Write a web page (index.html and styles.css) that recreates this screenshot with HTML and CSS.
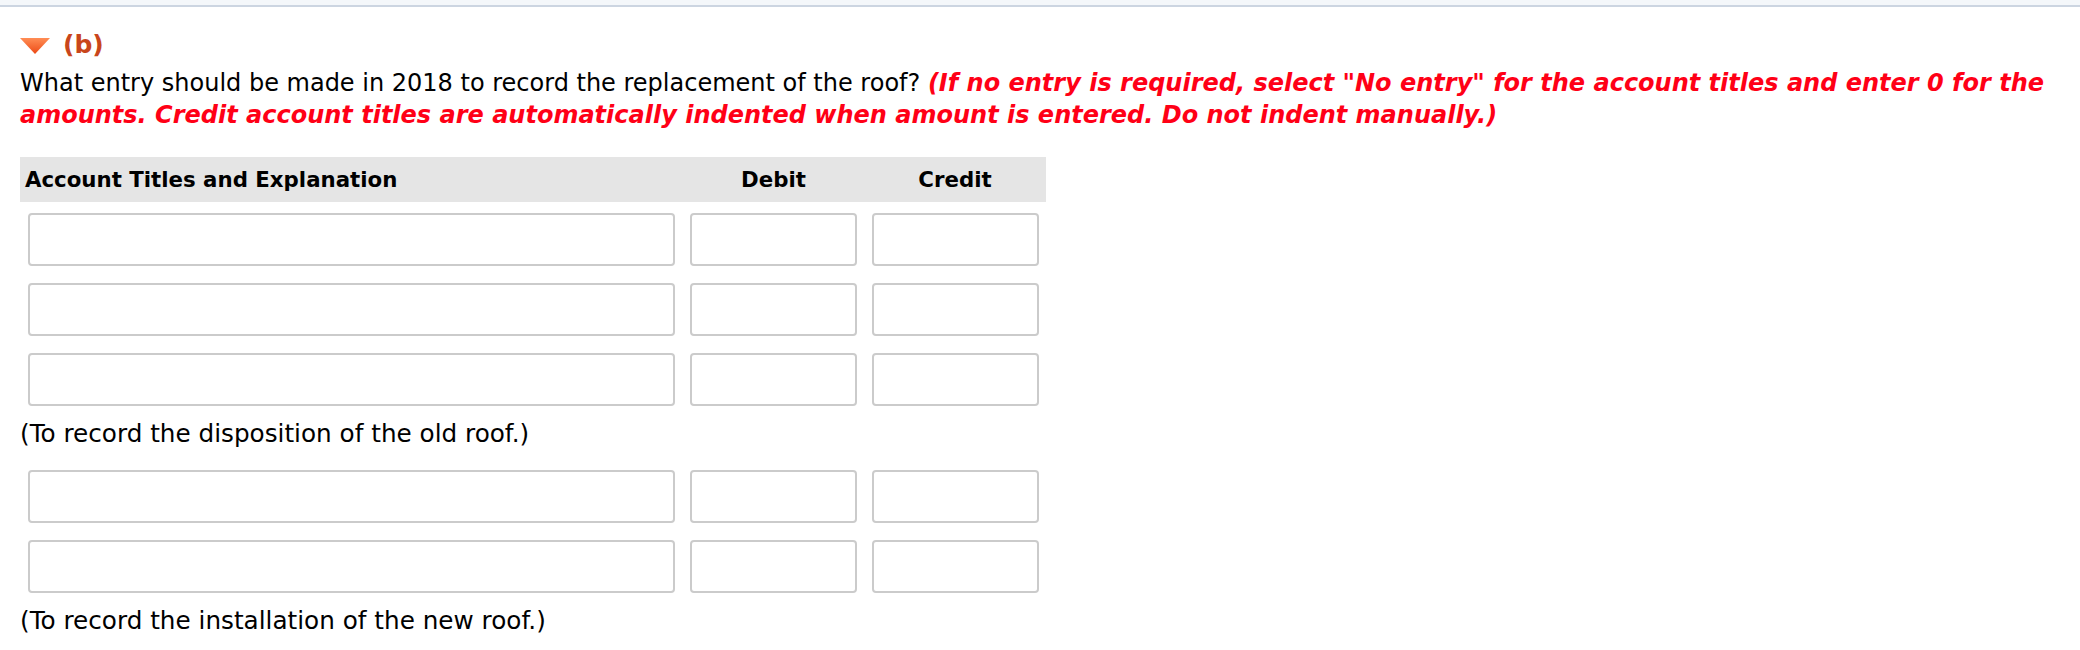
FILE: index.html
```html
<!DOCTYPE html>
<html>
<head>
<meta charset="utf-8">
<link rel="stylesheet" href="styles.css">
</head>
<body>
<div class="topbar"></div>
<div class="part">
  <div class="part-head">
    <svg class="caret" width="30" height="16" viewBox="0 0 30 16">
      <defs>
        <linearGradient id="cg" x1="0" y1="0" x2="0" y2="1">
          <stop offset="0" stop-color="#ff8d55"/>
          <stop offset="1" stop-color="#ec4a16"/>
        </linearGradient>
      </defs>
      <polygon points="0,0 30,0 15,16" fill="url(#cg)"/>
    </svg>
    <span class="part-label">(b)</span>
  </div>
  <p class="question">What entry should be made in 2018 to record the replacement of the roof? <em class="hint">(If no entry is required, select "No entry" for the account titles and enter 0 for the amounts. Credit account titles are automatically indented when amount is entered. Do not indent manually.)</em></p>

  <div class="journal">
    <div class="jhead">
      <div class="hcell hacc">Account Titles and Explanation</div>
      <div class="hcell hnum">Debit</div>
      <div class="hcell hnum">Credit</div>
    </div>
    <div class="jrows">
      <div class="jrow"><input class="in acc" type="text"><input class="in num" type="text"><input class="in num" type="text"></div>
      <div class="jrow"><input class="in acc" type="text"><input class="in num" type="text"><input class="in num" type="text"></div>
      <div class="jrow"><input class="in acc" type="text"><input class="in num" type="text"><input class="in num" type="text"></div>
    </div>
    <div class="note">(To record the disposition of the old roof.)</div>
    <div class="jrows">
      <div class="jrow"><input class="in acc" type="text"><input class="in num" type="text"><input class="in num" type="text"></div>
      <div class="jrow"><input class="in acc" type="text"><input class="in num" type="text"><input class="in num" type="text"></div>
    </div>
    <div class="note">(To record the installation of the new roof.)</div>
  </div>
</div>
</body>
</html>
```
FILE: styles.css
```css
html, body {
  margin: 0;
  padding: 0;
  background: #ffffff;
}
body {
  font-family: "DejaVu Sans", Verdana, sans-serif;
  font-size: 24px;
  color: #000000;
}
.topbar {
  height: 5px;
  background: #f4f7fa;
  border-bottom: 2px solid #ccd5e1;
}
.part {
  padding: 0 20px;
}
.part-head {
  display: flex;
  align-items: center;
  gap: 13px;
  height: 30px;
  margin-top: 23px;
}
.caret {
  display: block;
  margin-top: 1px;
}
.part-label {
  color: #c9461b;
  font-weight: bold;
  font-size: 25px;
  line-height: 30px;
}
.question {
  margin: 7px 0 0 0;
  line-height: 32px;
}
.hint {
  color: #ff0016;
  font-weight: bold;
  font-style: italic;
}
.journal {
  width: 1026px;
  margin-top: 26px;
}
.jhead {
  display: grid;
  grid-template-columns: 663px 181px 182px;
  height: 45px;
  background: #e5e5e5;
  font-weight: bold;
  font-size: 21.3px;
  line-height: 45px;
}
.hacc {
  padding-left: 5px;
}
.hnum {
  text-align: center;
}
.jrows {
  display: flex;
  flex-direction: column;
  gap: 17px;
  margin-top: 11px;
}
.jrows + .note + .jrows {
  margin-top: 21px;
}
.jrow {
  display: flex;
  gap: 15px;
  padding-left: 8px;
}
.in {
  box-sizing: border-box;
  height: 53px;
  margin: 0;
  border: 2px solid #cbcbcb;
  border-radius: 4px;
  background: #ffffff;
  font: inherit;
  outline: none;
}
.acc {
  width: 647px;
}
.num {
  width: 167px;
}
.note {
  margin-top: 12px;
  font-size: 24.7px;
  line-height: 31px;
}
```
